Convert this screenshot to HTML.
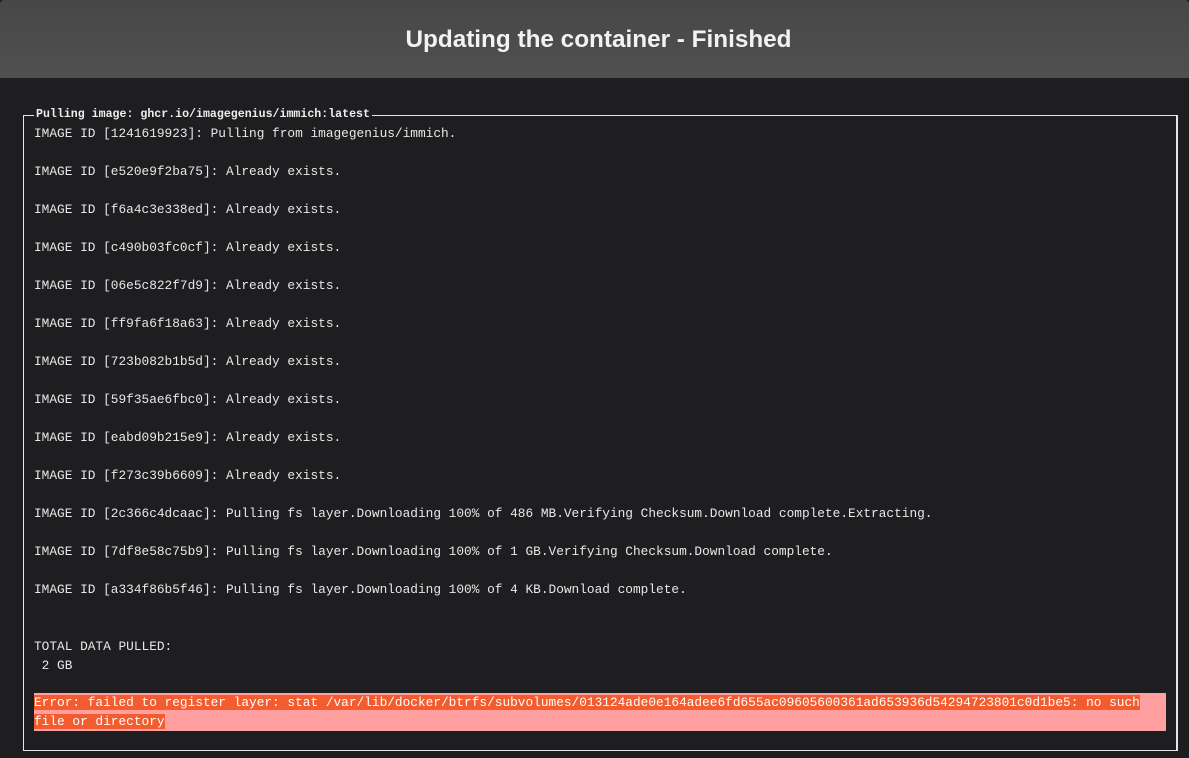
<!DOCTYPE html>
<html><head><meta charset="utf-8"><style>
html,body{margin:0;padding:0;}
body{width:1189px;height:758px;background:#1e1d1f;position:relative;overflow:hidden;font-family:"Liberation Mono",monospace;}
.hdr{position:absolute;left:0;top:0;width:1189px;height:78px;background:linear-gradient(#474747,#505050);border-radius:4px 4px 0 0;}
.hdr h1{margin:0;font:bold 24.3px/80px "Liberation Sans",sans-serif;color:#f2f2f2;text-align:center;padding-left:8px;}
.fs{position:absolute;left:23px;top:115px;width:1152px;height:634px;border:1px solid #e6e6e6;border-right-width:2px;}
.lg{position:absolute;left:34px;top:108px;background:#1e1d1f;padding:0 2px;font:bold 11.6px/14px "Liberation Mono",monospace;color:#eee;}
pre{position:absolute;left:34px;top:124px;margin:0;font:12.8px/19px "Liberation Mono",monospace;color:#e8e8e8;}
.err{position:absolute;left:34px;top:693px;width:1132px;height:38px;background:#ff9f9f;font:12.8px/19px "Liberation Mono",monospace;color:#fff;}
.err span{background:#f25c2e;}
</style></head><body>
<div class="hdr"><h1>Updating the container - Finished</h1></div>
<div class="fs"></div>
<div class="lg">Pulling image: ghcr.io/imagegenius/immich:latest</div>
<pre>IMAGE ID [1241619923]: Pulling from imagegenius/immich.

IMAGE ID [e520e9f2ba75]: Already exists.

IMAGE ID [f6a4c3e338ed]: Already exists.

IMAGE ID [c490b03fc0cf]: Already exists.

IMAGE ID [06e5c822f7d9]: Already exists.

IMAGE ID [ff9fa6f18a63]: Already exists.

IMAGE ID [723b082b1b5d]: Already exists.

IMAGE ID [59f35ae6fbc0]: Already exists.

IMAGE ID [eabd09b215e9]: Already exists.

IMAGE ID [f273c39b6609]: Already exists.

IMAGE ID [2c366c4dcaac]: Pulling fs layer.Downloading 100% of 486 MB.Verifying Checksum.Download complete.Extracting.

IMAGE ID [7df8e58c75b9]: Pulling fs layer.Downloading 100% of 1 GB.Verifying Checksum.Download complete.

IMAGE ID [a334f86b5f46]: Pulling fs layer.Downloading 100% of 4 KB.Download complete.


TOTAL DATA PULLED:
 2 GB</pre>
<div class="err"><span>Error: failed to register layer: stat /var/lib/docker/btrfs/subvolumes/013124ade0e164adee6fd655ac09605600361ad653936d54294723801c0d1be5: no such </span><br><span>file or directory</span></div>
</body></html>
